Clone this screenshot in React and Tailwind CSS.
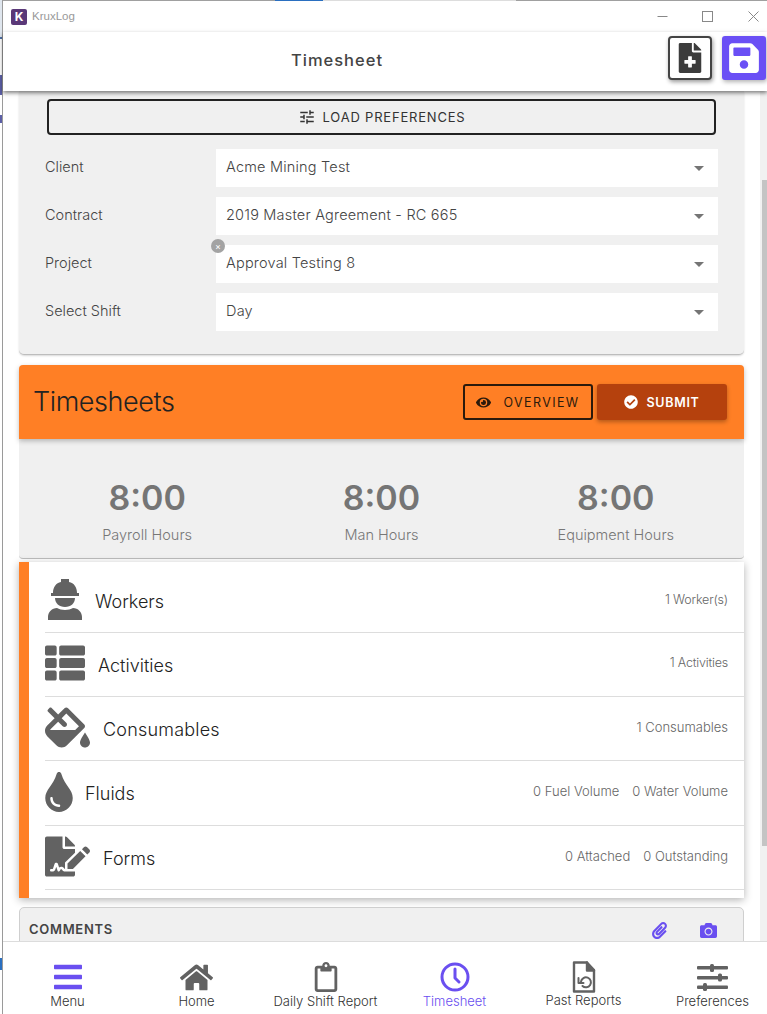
import React from "react";
import { FaBars, FaHome, FaRegClipboard, FaThList, FaFillDrip, FaTint, FaFileSignature, FaPaperclip, FaCamera, FaCheckCircle, FaEye, FaFileMedical, FaSave } from "react-icons/fa";
import { MdTune } from "react-icons/md";

const F = { fontFamily: "Inter, 'Noto Sans', sans-serif" };

function Select({ label, value, clear }) {
  return (
    <div className="flex items-center h-[38px]">
      <div className="w-[171px] pb-[2px] text-[14.5px] font-light text-[#444]">{label}</div>
      <div className="relative w-[502px] h-[38px] bg-white flex items-center justify-between pl-[10px] pr-[14px]">
        <span className="pb-[2px] text-[14.5px] font-light text-[#444] tracking-[0.2px]">{value}</span>
        <span className="w-0 h-0 border-l-[5px] border-r-[5px] border-t-[5px] border-l-transparent border-r-transparent border-t-[#757575]" />
        {clear && (
          <span className="absolute left-[-5px] top-[-6px] w-[14px] h-[14px] rounded-full bg-[#a3a3a3] text-white flex items-center justify-center text-[9px] leading-none">×</span>
        )}
      </div>
    </div>
  );
}

function Stat({ value, label }) {
  return (
    <div className="flex flex-col items-center">
      <div className="text-[34px] leading-[44px] font-semibold text-[#757575]">{value}</div>
      <div className="mt-[5px] text-[14.5px] leading-[20px] font-light text-[#777]">{label}</div>
    </div>
  );
}

function Row({ h, icon, title, gap, right, textCls = "mt-[1px]", rightCls = "mb-[2px] text-[13px]" }) {
  return (
    <div className={`flex items-center justify-between pr-4 ${h} border-b border-[#ddd]`}>
      <div className="flex items-center text-[#626262]">
        {icon}
        <span className={`text-[18px] font-light text-[#222] ${gap} ${textCls}`}>{title}</span>
      </div>
      <div className={`flex gap-[13px] font-light text-[#666] ${rightCls}`}>
        {right.map((r) => <span key={r}>{r}</span>)}
      </div>
    </div>
  );
}

function Worker() {
  return (
    <svg width="38" height="42" viewBox="0 0 38 42" className="mt-[6px] ml-[1px]" fill="currentColor">
      <path d="M7 14c0-6 3-10 8-11V0h8v3c5 1 8 5 8 11h2v3H5v-3z" />
      <path d="M9 19h20c0 5-4 9-10 9S9 24 9 19z" />
      <path d="M2 41v-3c0-5 4-9 9-9 2 1 5 2 8 2s6-1 8-2c5 0 9 4 9 9v3z" />
    </svg>
  );
}

function NavItem({ icon, label, active, labelActive, up }) {
  return (
    <div className="w-[129px] shrink-0 flex flex-col items-center">
      <div className={`h-[32px] shrink-0 flex items-center justify-center ${active ? "text-[#6a4ff0]" : "text-[#626262]"}`}>{icon}</div>
      <div className={`text-[13px] leading-[16px] font-light whitespace-nowrap ${up ? "mt-[-1px]" : ""} ${labelActive ? "text-[#6a4ff0]" : "text-[#333]"}`}>{label}</div>
    </div>
  );
}

function Clock() {
  return (
    <svg width="30" height="30" viewBox="0 0 30 30" fill="none" stroke="currentColor" strokeWidth="3" strokeLinecap="round" strokeLinejoin="round">
      <circle cx="15" cy="15" r="13" />
      <path d="M15 7v9l4 4" />
    </svg>
  );
}

function PastReport() {
  return (
    <svg width="24" height="32" viewBox="0 0 24 32" fill="none" stroke="currentColor" strokeWidth="2.4" strokeLinejoin="round" strokeLinecap="round">
      <path d="M2 1.5h13l7 7.5v21.5H2z" />
      <path d="M15 1.5v8h7" fill="currentColor" />
      <path d="M9 20.5a5 5 0 1 1 1.5 4.5" strokeWidth="2" />
      <path d="M6.500 17v5h5" strokeWidth="2" />
    </svg>
  );
}

function Sliders() {
  return (
    <svg width="31" height="27" viewBox="0 0 31 27" fill="currentColor">
      <rect x="0" y="2" width="31" height="3.500" rx="1" />
      <rect x="0" y="12" width="31" height="3.500" rx="1" />
      <rect x="0" y="21.500" width="31" height="3.500" rx="1" />
      <rect x="13" y="0" width="4" height="8" rx="1.500" />
      <rect x="21" y="9.500" width="4" height="8" rx="1.500" />
      <rect x="6" y="19" width="4" height="8" rx="1.500" />
    </svg>
  );
}

export default function App() {
  return (
    <div className="w-[767px] h-[1014px] flex overflow-hidden bg-white" style={F}>
      <div className="w-[3px] flex flex-col border-r border-[#9a9a9a]">
        <div className="h-[37px] bg-[#dfe6ee]" />
        <div className="h-[2px] bg-[#4c6fa8]" />
        <div className="h-[36px] bg-white" />
        <div className="h-[20px] bg-[#5c5fa6]" />
        <div className="h-[20px] bg-white" />
        <div className="h-[8px] bg-[#5c5fa6]" />
        <div className="h-[835px] bg-white" />
        <div className="h-[12px] bg-[#2a6fc0]" />
        <div className="flex-1 bg-white" />
      </div>
      <div className="flex-1 min-w-0 flex flex-col">
        <div className="h-[1px] flex">
          <div className="w-[272px] bg-[#a0a0a0]" />
          <div className="w-[48px] bg-[#2a6fc0]" />
          <div className="w-[193px] bg-[#dddddd]" />
          <div className="flex-1 bg-[#a0a0a0]" />
        </div>
        <div className="h-[31px] flex items-center bg-white pl-[8px]">
          <div className="w-[16px] h-[16px] rounded-[2px] bg-[#5a3878] text-white text-[12px] font-bold flex items-center justify-center">K</div>
          <span className="ml-[5px] text-[11.500px] text-[#999]" style={{ fontFamily: "'Liberation Sans', sans-serif" }}>KruxLog</span>
          <div className="ml-auto flex items-center text-[#888]">
            <svg width="11" height="11" viewBox="0 0 11 11" stroke="currentColor" fill="none"><path d="M0.500 5.500h10" /></svg>
            <svg width="11" height="11" viewBox="0 0 11 11" stroke="currentColor" fill="none" className="ml-[34px]"><rect x="0.500" y="0.500" width="10" height="10" /></svg>
            <svg width="11" height="11" viewBox="0 0 11 11" stroke="currentColor" fill="none" className="ml-[35px] mr-[8px]"><path d="M0.500 0.500l10 10M10.500 0.500l-10 10" /></svg>
          </div>
        </div>
        <div className="relative z-10 h-[59px] bg-white flex items-center shadow-[0_2px_4px_rgba(0,0,0,0.5)]">
          <div className="flex-1 text-center pl-[3px] pb-[2px] text-[16.500px] font-medium text-[#444] tracking-[1px]">Timesheet</div>
          <div className="mb-[7px] w-[44px] h-[44px] rounded-[4px] border-2 border-[#444] bg-white flex items-center justify-center text-[#3c3c3c] shadow-[1px_2px_4px_rgba(0,0,0,0.4)]">
            <FaFileMedical size={30} />
          </div>
          <div className="mb-[7px] ml-[10px] mr-[1px] w-[44px] h-[44px] rounded-[3px] bg-[#6a4ff5] flex items-center justify-center text-white shadow-[1px_2px_4px_rgba(0,0,0,0.3)]">
            <FaSave size={34} />
          </div>
        </div>

        <div className="flex-1 min-h-0 flex overflow-hidden">
          <div className="flex-1 min-w-0 pl-[16px] pr-[16px] overflow-hidden">
            <div className="h-[264px] bg-[#f0f0f0] rounded-b-[5px] pt-[8px] pl-[26px] border-b border-[#bdbdbd] shadow-[0_1px_2px_rgba(0,0,0,0.15)]">
              <div className="w-[669px] ml-[2px] h-[36px] border-2 border-[#222] rounded-[4px] flex items-center justify-center gap-[7px] text-[#333] text-[13px] font-normal tracking-[0.8px]">
                <MdTune size={18} />
                <span className="mt-[1px]">LOAD PREFERENCES</span>
              </div>
              <div className="mt-[14px] flex flex-col gap-[10px]">
                <Select label="Client" value="Acme Mining Test" />
                <Select label="Contract" value="2019 Master Agreement - RC 665" />
                <Select label="Project" value="Approval Testing 8" clear />
                <Select label="Select Shift" value="Day" />
              </div>
            </div>

            <div className="mt-[10px] h-[74px] bg-[#ff7f25] rounded-t-[4px] flex items-center pl-[15px] pr-[17px] relative z-[1] shadow-[0_2px_5px_rgba(0,0,0,0.25)]">
              <div className="text-[27px] font-light text-[#222] tracking-[-0.4px] ml-[-1px]">Timesheets</div>
              <div className="ml-auto w-[130px] h-[36px] border-2 border-[#2b1a0c] rounded-[3px] flex items-center justify-center gap-[12px] text-[#2b1a0c] text-[12.5px] tracking-[1.400px]">
                <FaEye size={15} />
                <span className="mt-[2px]">OVERVIEW</span>
              </div>
              <div className="ml-[4px] w-[130px] h-[36px] bg-[#b5410d] rounded-[3px] flex items-center justify-center gap-[8px] text-white text-[12.5px] font-semibold tracking-[0.7px] shadow-[0_2px_4px_rgba(0,0,0,0.3)]">
                <FaCheckCircle size={14} />
                <span className="mt-[2px]">SUBMIT</span>
              </div>
            </div>
            <div className="h-[120px] bg-[#f0f0f0] rounded-b-[4px] border-b border-[#bdbdbd] px-[11px] pt-[37px] grid grid-cols-3">
              <Stat value="8:00" label="Payroll Hours" />
              <Stat value="8:00" label="Man Hours" />
              <Stat value="8:00" label="Equipment Hours" />
            </div>

            <div className="mt-[3px] h-[336px] bg-white border-l-[10px] border-[#ff7f25] pl-[16px] shadow-[0_2px_8px_rgba(0,0,0,0.3)]">
              <Row h="h-[71px]" icon={<Worker />} title="Workers" gap="ml-[11px]" textCls="mt-[8px]" rightCls="mt-[6px] text-[12.5px] tracking-[-0.2px]" right={["1 Worker(s)"]} />
              <Row h="h-[64px]" icon={<FaThList size={40} className="mb-[3px]" />} title="Activities" gap="ml-[13px]" rightCls="mb-[2px] text-[12.5px] tracking-[-0.2px]" right={["1 Activities"]} />
              <Row h="h-[64px]" icon={<FaFillDrip size={45} className="mb-[3px]" />} title="Consumables" gap="ml-[13px] tracking-[0.2px]" right={["1 Consumables"]} />
              <Row h="h-[65px]" icon={<FaTint className="mb-[3px] w-[28px] h-[40px]" />} title="Fluids" gap="ml-[12px]" right={["0 Fuel Volume", "0 Water Volume"]} />
              <Row h="h-[64px]" icon={<FaFileSignature size={45} className="mb-[3px]" />} title="Forms" gap="ml-[13px]" right={["0 Attached", "0 Outstanding"]} />
            </div>

            <div className="mt-[9px] h-[60px] bg-[#f0f0f0] border border-[#cfcfcf] rounded-t-[5px] pl-[9px] pr-[26px] pt-[12px] flex items-start justify-between">
              <div className="text-[13px] font-semibold text-[#444] tracking-[0.7px]">COMMENTS</div>
              <div className="flex gap-[32px] text-[#6a4ff0] pt-[2px]">
                <FaPaperclip size={17} />
                <FaCamera size={17} />
              </div>
            </div>
          </div>
          <div className="w-[7px] bg-[#f1f1f1] pl-[2px] pt-[89px]">
            <div className="h-[666px] bg-[#c4c4c4]" />
          </div>
        </div>

        <div className="relative z-10 h-[73px] bg-white border-t border-[#dcdcdc] flex pt-[19px] overflow-hidden">
          <NavItem active label="Menu" icon={<FaBars size={32} />} />
          <NavItem label="Home" icon={<FaHome size={33} />} />
          <NavItem label="Daily Shift Report" icon={<FaRegClipboard size={30} />} />
          <NavItem active labelActive label="Timesheet" icon={<Clock />} />
          <NavItem up label="Past Reports" icon={<PastReport />} />
          <NavItem label="Preferences" icon={<Sliders />} />
        </div>
      </div>
    </div>
  );
}
